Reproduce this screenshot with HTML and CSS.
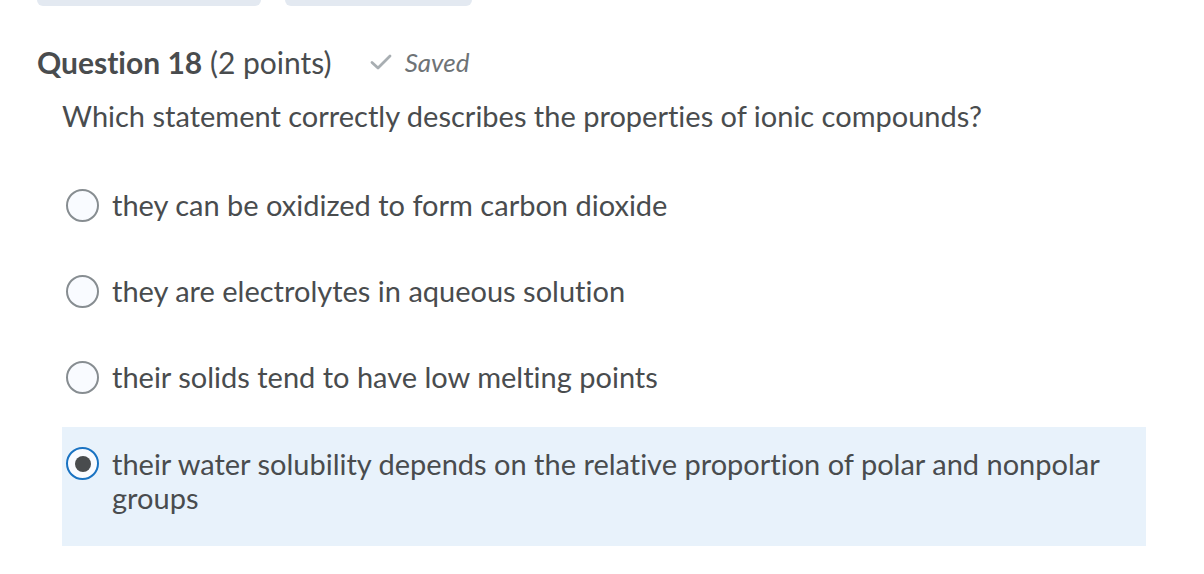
FILE: index.html
```html
<!DOCTYPE html>
<html>
<head>
<meta charset="utf-8">
<link rel="stylesheet" href="styles.css">
</head>
<body>
<div class="topbar">
  <div class="tab tab1"></div>
  <div class="tab tab2"></div>
</div>
<section class="question">
  <div class="qhead">
    <h2 class="qtitle"><span class="qnum">Question 18</span> (2 points)</h2>
    <span class="saved">
      <svg class="check" width="22" height="18" viewBox="0 0 22 18"><path d="M2 9.5 L8 15 L20 3" fill="none" stroke="#a8aeb2" stroke-width="2.8" stroke-linecap="round" stroke-linejoin="round"/></svg>
      <em>Saved</em>
    </span>
  </div>
  <p class="qtext">Which statement correctly describes the properties of ionic compounds?</p>
  <div class="options">
    <label class="opt"><span class="radio"></span><span class="otext">they can be oxidized to form carbon dioxide</span></label>
    <label class="opt"><span class="radio"></span><span class="otext">they are electrolytes in aqueous solution</span></label>
    <label class="opt"><span class="radio"></span><span class="otext">their solids tend to have low melting points</span></label>
    <label class="opt selected"><span class="radio"><span class="dot"></span></span><span class="otext">their water solubility depends on the relative proportion of polar and nonpolar groups</span></label>
  </div>
</section>
</body>
</html>
```
FILE: styles.css
```css
html, body {
  margin: 0;
  padding: 0;
  background: #ffffff;
}
body {
  font-family: Lato, "Open Sans", sans-serif;
  font-variant-ligatures: none;
  color: #494c4e;
  width: 1204px;
  height: 574px;
  overflow: hidden;
}
.topbar {
  display: flex;
  gap: 24px;
  padding-left: 37px;
  height: 6px;
}
.tab {
  height: 6px;
  background: #e3e9f1;
  border-radius: 0 0 8px 8px;
}
.tab1 { width: 224px; }
.tab2 { width: 187px; }
.question {
  padding-left: 37px;
}
.qhead {
  display: flex;
  align-items: center;
  margin-top: 41px;
  height: 30px;
}
.qtitle {
  margin: 0;
  font-size: 30px;
  font-weight: 400;
  line-height: 30px;
}
.qnum {
  font-weight: 700;
}
.saved {
  display: flex;
  align-items: center;
  margin-left: 38px;
  color: #6e7376;
  font-size: 26px;
}
.check {
  margin-right: 13px;
}
.saved em {
  font-style: italic;
}
.qtext {
  margin: 22px 0 0 25px;
  font-size: 29px;
  line-height: 34px;
}
.options {
  margin: 36px 0 0 25px;
  width: 1084px;
}
.opt {
  display: flex;
  align-items: flex-start;
  padding: 19px 0 18px 4px;
  font-size: 29px;
  line-height: 34px;
  margin-bottom: 15px;
}
.opt.selected {
  background: #e8f2fb;
  padding-top: 20px;
  padding-bottom: 31px;
  margin-top: 1px;
}
.selected .radio {
  margin-top: 0;
}
.radio {
  flex: none;
  box-sizing: border-box;
  width: 33px;
  height: 33px;
  border: 2px solid #878d91;
  border-radius: 50%;
  background: #f9fbff;
  margin-top: 1px;
  margin-right: 13px;
  display: flex;
  align-items: center;
  justify-content: center;
}
.selected .radio {
  border: 2.5px solid #1a73c2;
}
.dot {
  width: 16px;
  height: 16px;
  border-radius: 50%;
  background: #494c4e;
}
.otext {
  padding-right: 30px;
}
```
